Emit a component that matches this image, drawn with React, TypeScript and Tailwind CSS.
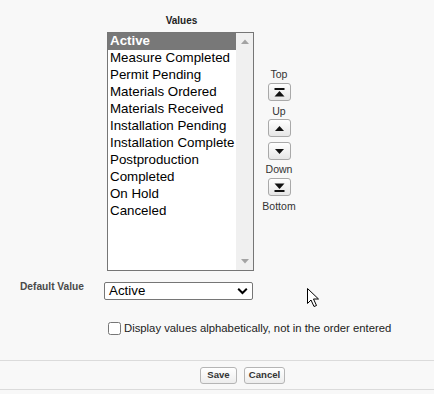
import React from "react";

const options = [
  "Active",
  "Measure Completed",
  "Permit Pending",
  "Materials Ordered",
  "Materials Received",
  "Installation Pending",
  "Installation Complete",
  "Postproduction",
  "Completed",
  "On Hold",
  "Canceled",
];

function MoveButton({ kind }: { kind: "top" | "up" | "down" | "bottom" }) {
  return (
    <div className="w-[23px] h-[18px] rounded-[3px] border border-[#a9a9a9] bg-gradient-to-b from-white to-[#e6e6e6] flex items-center justify-center">
      <svg width="11" height="9" viewBox="0 0 11 9">
        {kind === "top" && (
          <>
            <rect x="0.5" y="0" width="10" height="2" fill="#111" />
            <path d="M0.5 8.5 L5.5 3 L10.5 8.5 Z" fill="#111" />
          </>
        )}
        {kind === "up" && <path d="M1 7 L5.5 2 L10 7 Z" fill="#111" />}
        {kind === "down" && <path d="M1 2 L5.5 7 L10 2 Z" fill="#111" />}
        {kind === "bottom" && (
          <>
            <path d="M0.5 0.5 L5.5 6 L10.5 0.5 Z" fill="#111" />
            <rect x="0.5" y="7" width="10" height="2" fill="#111" />
          </>
        )}
      </svg>
    </div>
  );
}

export default function App() {
  return (
    <div
      className="relative w-[434px] h-[394px] bg-[#f8f8f8] text-[#222] overflow-hidden"
      style={{ fontFamily: '"Liberation Sans", Arial, sans-serif' }}
    >
      {/* Title */}
      <div className="pt-[15px] pl-[107px]">
        <div className="w-[149px] text-center text-[10px] leading-[12px] font-bold text-[#222]">
          Values
        </div>
      </div>

      {/* List + move buttons */}
      <div className="flex pl-[107px] mt-[5px]">
        <div className="w-[147px] h-[239px] border border-[#767676] bg-white flex">
          <div className="flex-1 flex flex-col text-[13.33px] text-black">
            {options.map((o, i) => (
              <div
                key={o}
                className={
                  i === 0
                    ? "h-[17px] leading-[15px] pl-[2px] bg-[#787878] text-white font-bold whitespace-nowrap"
                    : "h-[17px] leading-[15px] pl-[2px] whitespace-nowrap"
                }
              >
                {o}
              </div>
            ))}
          </div>
          <div className="w-[17px] bg-[#f0f0f0] flex flex-col justify-between items-center py-[6px]">
            <svg width="8" height="5" viewBox="0 0 8 5">
              <path d="M0 5 L4 0.5 L8 5 Z" fill="#a3a3a3" />
            </svg>
            <svg width="8" height="5" viewBox="0 0 8 5">
              <path d="M0 0 L4 4.5 L8 0 Z" fill="#a3a3a3" />
            </svg>
          </div>
        </div>

        <div className="w-[50px] ml-[0px] mt-[35px] flex flex-col items-center text-[10.5px] leading-[14px] text-[#333]">
          <div>Top</div>
          <div className="mt-[2px]">
            <MoveButton kind="top" />
          </div>
          <div className="mt-[3px]">Up</div>
          <div className="mt-[1px]">
            <MoveButton kind="up" />
          </div>
          <div className="mt-[5px]">
            <MoveButton kind="down" />
          </div>
          <div className="mt-[2px]">Down</div>
          <div className="mt-[2px]">
            <MoveButton kind="bottom" />
          </div>
          <div className="mt-[3px]">Bottom</div>
        </div>
      </div>

      {/* Default value */}
      <div className="flex items-start mt-[10px]">
        <div className="w-[104px] pl-[20px] text-[10.2px] leading-[12px] font-bold text-[#4a4a4a]">
          Default Value
        </div>
        <div className="mt-[1px] w-[149px] h-[18px] border border-[#767676] rounded-[2px] bg-white flex items-center justify-between pl-[4px] pr-[4px] text-[13.33px] text-black">
          <span>Active</span>
          <svg width="11" height="8" viewBox="0 0 11 8">
            <path d="M1.2 1.8 L5.5 6 L9.8 1.8" fill="none" stroke="#000" strokeWidth="2" />
          </svg>
        </div>
      </div>

      {/* Checkbox */}
      <div className="flex items-center pl-[108px] mt-[21px]">
        <div className="w-[13px] h-[13px] border border-[#767676] rounded-[2.5px] bg-white" />
        <div className="ml-[3px] text-[11.3px] leading-[14px] text-[#222] whitespace-nowrap">
          Display values alphabetically, not in the order entered
        </div>
      </div>

      {/* Footer */}
      <div className="absolute left-0 right-0 top-[360px] border-t border-[#dbdbdb] border-b h-[30px] flex items-center pl-[200px] gap-[7px]">
        <div className="w-[37px] h-[17px] rounded-[3px] border border-[#b5b5b5] bg-gradient-to-b from-white to-[#ededed] flex items-center justify-center text-[9.6px] font-bold text-[#333]">
          Save
        </div>
        <div className="w-[41px] h-[17px] rounded-[3px] border border-[#b5b5b5] bg-gradient-to-b from-white to-[#ededed] flex items-center justify-center text-[9.6px] font-bold text-[#333]">
          Cancel
        </div>
      </div>

      {/* Mouse cursor */}
      <svg
        className="absolute left-[306px] top-[287px]"
        width="14"
        height="21"
        viewBox="0 0 14 21"
      >
        <path
          d="M1.5 1.5 L1.5 16.5 L5 13 L8 19.5 L10.5 18.5 L7.5 12 L12.5 12 Z"
          fill="#fff"
          stroke="#000"
          strokeWidth="1"
          strokeLinejoin="miter"
        />
      </svg>
    </div>
  );
}
